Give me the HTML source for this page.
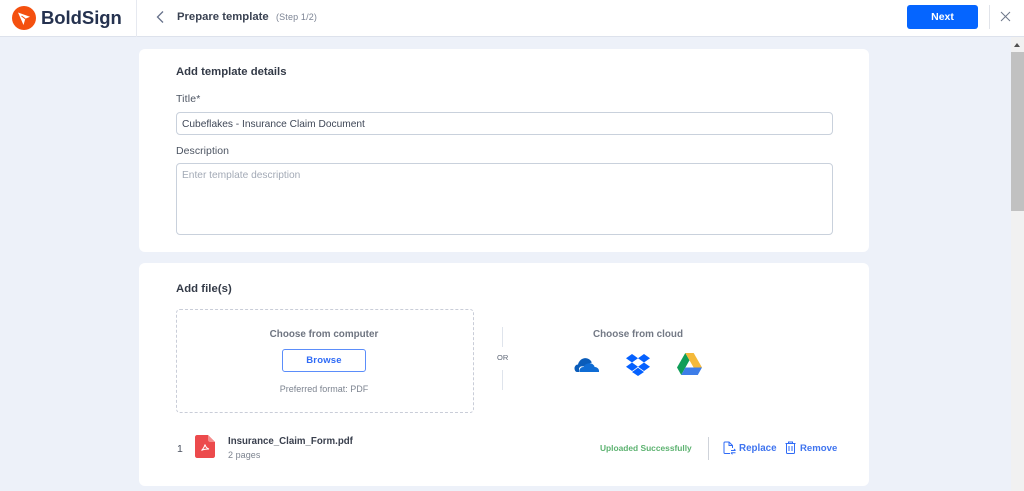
<!DOCTYPE html>
<html><head><meta charset="utf-8"><title>Prepare template</title>
<style>
html,body{margin:0;padding:0;width:1024px;height:491px;overflow:hidden;background:#edf1f9;font-family:"Liberation Sans",sans-serif}
.a{position:absolute;white-space:nowrap;line-height:1}
.card{position:absolute;background:#fff;border-radius:6px}
.input{position:absolute;background:#fff;border:1px solid #c9d1dc;border-radius:4px;box-sizing:border-box}
</style></head><body>
<div class="a" style="left:0;top:0;width:1024px;height:37px;background:#fff;border-bottom:1px solid #dde2ec;box-sizing:border-box"></div>
<div class="a" style="left:136px;top:0;width:1px;height:37px;background:#e6e9f0"></div>
<svg class="a" style="left:12px;top:6px" width="24" height="24" viewBox="0 0 24 24"><circle cx="12" cy="12" r="12" fill="#f4500f"/><path d="M6 6.500L18 10.800L13.300 12.800L11.500 19Z" fill="#fff"/><path d="M13.300 12.800L9.500 10" stroke="#f4500f" stroke-width="1"/></svg>
<div class="a" style="left:41px;top:8px;font-size:18.500px;font-weight:700;color:#25324f;line-height:20px;letter-spacing:-.05px">BoldSign</div>
<svg class="a" style="left:155px;top:10px" width="10" height="14" viewBox="0 0 10 14"><path d="M8 1.500L2.500 7L8 12.500" fill="none" stroke="#66718a" stroke-width="1.300"/></svg>
<div class="a" style="left:177px;top:12px;font-size:11.300px;font-weight:700;color:#3a4252">Prepare template</div>
<div class="a" style="left:276px;top:13px;font-size:9px;color:#7c8494;letter-spacing:.15px">(Step 1/2)</div>
<div class="a" style="left:907px;top:5px;width:71px;height:24px;background:#0565ff;border-radius:3px;color:#fff;font-size:10.500px;font-weight:700;text-align:center;line-height:24px">Next</div>
<div class="a" style="left:989px;top:5px;width:1px;height:24px;background:#e1e4ea"></div>
<svg class="a" style="left:1000px;top:11px" width="11" height="11" viewBox="0 0 11 11"><path d="M1 1L10 10M10 1L1 10" stroke="#6d7789" stroke-width="1"/></svg>

<div class="card" style="left:139px;top:49px;width:730px;height:203px"></div>
<div class="a" style="left:176px;top:66px;font-size:11.300px;line-height:12px;font-weight:700;color:#333a47">Add template details</div>
<div class="a" style="left:176px;top:94px;font-size:10.500px;line-height:11px;color:#4c5462;letter-spacing:.15px">Title*</div>
<div class="input" style="left:176px;top:112px;width:657px;height:23px"></div>
<div class="a" style="left:182px;top:119px;font-size:10.200px;line-height:11px;color:#3f4757">Cubeflakes - Insurance Claim Document</div>
<div class="a" style="left:176px;top:146px;font-size:10.500px;line-height:11px;color:#4c5462;letter-spacing:.05px">Description</div>
<div class="input" style="left:176px;top:163px;width:657px;height:72px"></div>
<div class="a" style="left:182px;top:170px;font-size:10.200px;line-height:11px;color:#a3aab6">Enter template description</div>

<div class="card" style="left:139px;top:263px;width:730px;height:223px"></div>
<div class="a" style="left:176px;top:283px;font-size:11.300px;line-height:12px;font-weight:700;color:#333a47;letter-spacing:.05px">Add file(s)</div>
<div class="a" style="left:176px;top:309px;width:298px;height:104px;box-sizing:border-box;border:1px dashed #c9cdd8;border-radius:4px"></div>
<div class="a" style="left:176px;top:329px;width:296px;text-align:center;font-size:9.900px;line-height:11px;font-weight:700;color:#6e7480">Choose from computer</div>
<div class="a" style="left:282px;top:349px;width:84px;height:23px;box-sizing:border-box;border:1px solid #5b8dfa;border-radius:3px;text-align:center;line-height:21px;font-size:9.500px;font-weight:700;color:#2f6bf6;letter-spacing:.2px">Browse</div>
<div class="a" style="left:176px;top:384px;width:296px;text-align:center;font-size:9px;line-height:10px;color:#7d8490;letter-spacing:0">Preferred format: PDF</div>

<div class="a" style="left:502px;top:327px;width:1px;height:20px;background:#dfe4ec"></div>
<div class="a" style="left:497px;top:354px;font-size:7.500px;color:#5d6675">OR</div>
<div class="a" style="left:502px;top:370px;width:1px;height:20px;background:#dfe4ec"></div>
<div class="a" style="left:593px;top:329px;font-size:9.900px;line-height:11px;font-weight:700;color:#737985">Choose from cloud</div>

<svg class="a" style="left:574px;top:357px" width="26" height="16" viewBox="0 0 26 16"><path d="M1 13.500C-.5 10.500 1.500 7.500 4 7.500C5 3 9.500 0 13.500 1.500C15.500 2.200 17 3.500 17.800 5.500L9 9.500C7 9 5.200 10 5 12L5.500 15H3C2 15 1.500 14.500 1 13.500Z" fill="#0a5cba"/><path d="M6 15C4.800 12.500 6.500 10 9.500 10C11 6.500 16 5 19 7.500C20 8.300 20.500 9 20.500 10C23 9.800 25.500 12 25 15Z" fill="#0f6cd4"/></svg>
<svg class="a" style="left:626px;top:354px" width="24" height="22" viewBox="0 0 24 22"><path d="M6 0L12 4.200L6 8.500L0 4.200ZM18 0L24 4.200L18 8.500L12 4.200ZM0 12.800L6 8.500L12 12.800L6 17ZM18 8.500L24 12.800L18 17L12 12.800ZM6 18L12 13.800L18 18L12 22Z" fill="#0561ff"/></svg>
<svg class="a" style="left:677px;top:353px" width="25" height="22" viewBox="0 0 25 22"><path d="M8.300 0L0 14.500L4.200 22L12.500 7.300Z" fill="#0f9d58"/><path d="M8.300 0H16.700L25 14.500H16.600Z" fill="#f4b93a"/><path d="M4.200 22H20.800L25 14.500H8.400Z" fill="#3d7de8"/></svg>

<div class="a" style="left:177px;top:444px;font-size:10.500px;color:#4a5160">1</div>
<svg class="a" style="left:195px;top:435px" width="20" height="23" viewBox="0 0 20 23"><path d="M2 0H13L20 7V21C20 22 19 23 18 23H2C1 23 0 22 0 21V2C0 1 1 0 2 0Z" fill="#ec4a4c"/><path d="M13 0L20 7H15C14 7 13 6 13 5Z" fill="#f58d8d"/><path d="M6.500 15.500C8 14 9.500 11.500 10 9.500C10.500 11.500 12 13.500 14 14C12 14 8.500 14.300 6.500 15.500Z" fill="none" stroke="#fff" stroke-width="1"/></svg>
<div class="a" style="left:228px;top:436px;font-size:9.700px;line-height:11px;font-weight:700;color:#3a404e">Insurance_Claim_Form.pdf</div>
<div class="a" style="left:228px;top:450px;font-size:9px;line-height:10px;color:#7d8490;letter-spacing:.05px">2 pages</div>

<div class="a" style="left:600px;top:443px;font-size:8.400px;line-height:10px;font-weight:700;color:#5cb270">Uploaded Successfully</div>
<div class="a" style="left:708px;top:437px;width:1px;height:23px;background:#cfd3da"></div>
<svg class="a" style="left:723px;top:441px" width="13" height="14" viewBox="0 0 13 14"><path d="M7 12.500H2C1.300 12.500 1 12 1 11.500V2C1 1.500 1.300 1 2 1H6L9.500 4.500V7M6 1V4.500H9.500M8 9.500H12.500M11 8L12.500 9.500M12.500 11.800H8M9.500 13.300L8 11.800" fill="none" stroke="#2f6bf6" stroke-width="1"/></svg>
<div class="a" style="left:739px;top:443px;font-size:9.800px;line-height:11px;font-weight:700;color:#3f74ef">Replace</div>
<svg class="a" style="left:785px;top:441px" width="11" height="13" viewBox="0 0 11 13"><path d="M.5 2.500H10.500M3.500 2.500V1H7.500V2.500M1.500 2.500V11.500C1.500 12 2 12.500 2.500 12.500H8.500C9 12.500 9.500 12 9.500 11.500V2.500M4 5V10M7 5V10" fill="none" stroke="#2f6bf6" stroke-width="1"/></svg>
<div class="a" style="left:800px;top:443px;font-size:9.600px;line-height:11px;font-weight:700;color:#3f74ef">Remove</div>

<div class="a" style="left:1011px;top:37px;width:13px;height:454px;background:#f1f1f1"></div>
<div class="a" style="left:1014px;top:43px;width:0;height:0;border-left:3.500px solid transparent;border-right:3.500px solid transparent;border-bottom:4px solid #505050"></div>
<div class="a" style="left:1011px;top:52px;width:13px;height:159px;background:#c1c1c1"></div>
</body></html>
